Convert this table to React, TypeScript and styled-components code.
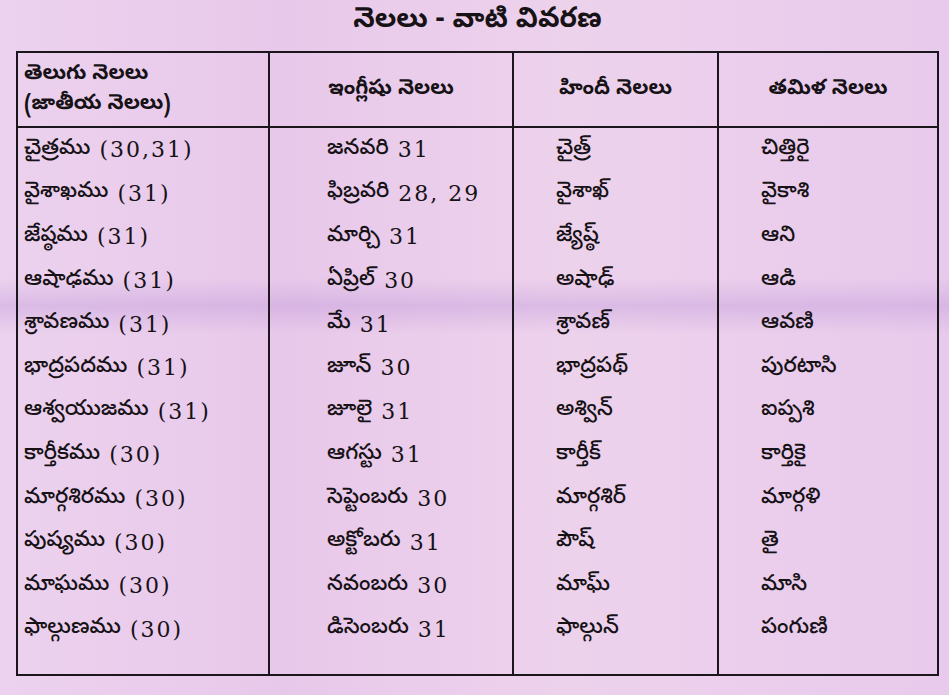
import React from "react";
import styled, { createGlobalStyle } from "styled-components";

const Global = createGlobalStyle`
  html, body { margin: 0; padding: 0; }
  body {
    width: 949px;
    height: 695px;
    overflow: hidden;
    background: #eaccec;
  }
`;

const TE = `"Noto Sans Telugu", "Noto Serif Telugu", "Lohit Telugu", "Pothana2000", "Vemana2000", "Gurajada", "Ramabhadra", "Mallanna", "NTR", "Suranna", "Gidugu", "Mandali", "Ramaraja", "DejaVu Serif", serif`;

const Page = styled.div`
  width: 949px;
  height: 695px;
  box-sizing: border-box;
  padding: 7px 10px 0 16px;
  background:
    linear-gradient(180deg, rgba(190,150,215,0) 0%, rgba(190,150,215,0) 40%, rgba(185,145,215,0.35) 44%, rgba(190,150,215,0) 48%, rgba(190,150,215,0) 100%),
    linear-gradient(90deg, #ecd2ee 0%, #e8c8ea 30%, #edd2ec 60%, #e8caec 100%);
  font-family: ${TE};
  color: #161216;
`;

const Title = styled.h1`
  margin: 0;
  height: 44px;
  text-align: center;
  font-size: 28px;
  font-weight: 700;
  line-height: 30px;
`;

const Table = styled.div`
  width: 923px;
  height: 625px;
  box-sizing: border-box;
  border: 2px solid #1b161b;
  display: grid;
  grid-template-columns: 252px 244px 205px 1fr;
  grid-template-rows: 75px 1fr;
`;

const HeadCell = styled.div<{ $align?: "left" | "center"; $last?: boolean }>`
  border-right: ${(p) => (p.$last ? "none" : "2px solid #1b161b")};
  border-bottom: 2px solid #1b161b;
  display: flex;
  flex-direction: column;
  justify-content: center;
  align-items: ${(p) => (p.$align === "left" ? "flex-start" : "center")};
  padding-left: ${(p) => (p.$align === "left" ? "6px" : "0")};
  font-size: 21px;
  font-weight: 700;
  line-height: 30px;
`;

const Column = styled.div<{ $pad: number; $last?: boolean }>`
  border-right: ${(p) => (p.$last ? "none" : "2px solid #1b161b")};
  display: flex;
  flex-direction: column;
  padding-left: ${(p) => p.$pad}px;
`;

const Cell = styled.div`
  height: 43.6px;
  display: flex;
  align-items: center;
  font-size: 22px;
  font-weight: 500;
  white-space: nowrap;
`;

const Num = styled.span`
  font-family: "DejaVu Serif", "Liberation Serif", serif;
  font-size: 22px;
  font-weight: 400;
  letter-spacing: 2px;
  margin-left: 9px;
`;

type Row = [string, string, string, string, string];

const rows: Row[] = [
  ["చైత్రము", "(30,31)", "జనవరి 31", "చైత్ర్", "చిత్తిరై"],
  ["వైశాఖము", "(31)", "ఫిబ్రవరి 28, 29", "వైశాఖ్", "వైకాశి"],
  ["జేష్ఠము", "(31)", "మార్చి 31", "జ్యేష్ఠ్", "ఆని"],
  ["ఆషాఢము", "(31)", "ఏప్రిల్ 30", "అషాఢ్", "ఆడి"],
  ["శ్రావణము", "(31)", "మే 31", "శ్రావణ్", "ఆవణి"],
  ["భాద్రపదము", "(31)", "జూన్ 30", "భాద్రపథ్", "పురటాసి"],
  ["ఆశ్వయుజము", "(31)", "జూలై 31", "అశ్విన్", "ఐప్పశి"],
  ["కార్తీకము", "(30)", "ఆగస్టు 31", "కార్తీక్", "కార్తికై"],
  ["మార్గశిరము", "(30)", "సెప్టెంబరు 30", "మార్గశిర్", "మార్గళి"],
  ["పుష్యము", "(30)", "అక్టోబరు 31", "పౌష్", "తై"],
  ["మాఘము", "(30)", "నవంబరు 30", "మాఘ్", "మాసి"],
  ["ఫాల్గుణము", "(30)", "డిసెంబరు 31", "ఫాల్గున్", "పంగుణి"],
];

function splitNum(s: string) {
  const m = s.match(/^(\S+)\s(.+)$/);
  if (!m) return <>{s}</>;
  return (
    <>
      {m[1]}
      <Num>{m[2]}</Num>
    </>
  );
}

export default function App() {
  return (
    <>
      <Global />
      <Page>
        <Title>నెలలు - వాటి వివరణ</Title>
        <Table>
          <HeadCell $align="left">
            <span>తెలుగు నెలలు</span>
            <span>(జాతీయ నెలలు)</span>
          </HeadCell>
          <HeadCell>ఇంగ్లీషు నెలలు</HeadCell>
          <HeadCell>హిందీ నెలలు</HeadCell>
          <HeadCell $last>తమిళ నెలలు</HeadCell>

          <Column $pad={6}>
            {rows.map((r) => (
              <Cell key={r[0]}>
                {r[0]}
                <Num>{r[1]}</Num>
              </Cell>
            ))}
          </Column>
          <Column $pad={57}>
            {rows.map((r) => (
              <Cell key={r[2]}>{splitNum(r[2])}</Cell>
            ))}
          </Column>
          <Column $pad={42}>
            {rows.map((r) => (
              <Cell key={r[3]}>{r[3]}</Cell>
            ))}
          </Column>
          <Column $pad={42} $last>
            {rows.map((r) => (
              <Cell key={r[4]}>{r[4]}</Cell>
            ))}
          </Column>
        </Table>
      </Page>
    </>
  );
}
